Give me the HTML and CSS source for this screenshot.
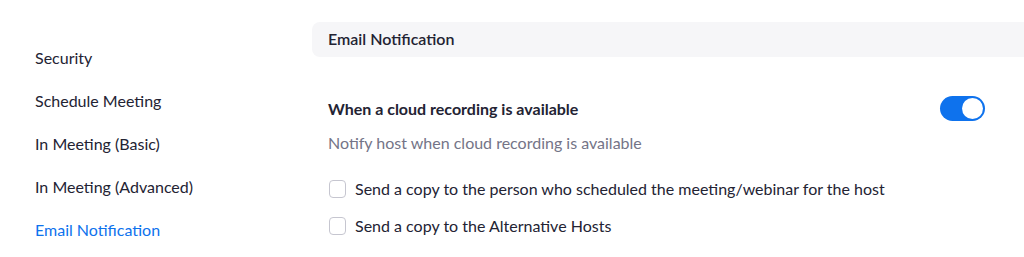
FILE: index.html
```html
<!DOCTYPE html>
<html>
<head>
  <meta charset="UTF-8" />
  <title>Settings - Email Notification</title>
  <link rel="stylesheet" href="styles.css">
</head>
<body>
  <div class="page">
    <!-- Settings menu -->
    <div class="side-nav">
      <a href="#" class="nav-item">Security</a>
      <a href="#" class="nav-item">Schedule Meeting</a>
      <a href="#" class="nav-item">In Meeting (Basic)</a>
      <a href="#" class="nav-item">In Meeting (Advanced)</a>
      <a href="#" class="nav-item active">Email Notification</a>
    </div>

    <!-- Settings content -->
    <div class="content">
      <div class="section-title">Email Notification</div>

      <div class="setting">
        <div class="setting-row">
          <div class="setting-name">When a cloud recording is available</div>
          <label class="toggle on"><span class="knob"></span></label>
        </div>
        <div class="setting-desc">Notify host when cloud recording is available</div>
        <label class="check-row"><span class="checkbox"></span>Send a copy to the person who scheduled the meeting/webinar for the host</label>
        <label class="check-row"><span class="checkbox"></span>Send a copy to the Alternative Hosts</label>
      </div>
    </div>
  </div>
</body>
</html>
```

FILE: styles.css
```css
* {
  margin: 0;
  padding: 0;
  box-sizing: border-box;
}

body {
  font-family: Lato, 'Open Sans', sans-serif;
  font-size: 16px;
  background: #fff;
  color: #232333;
}

.page {
  display: flex;
}

.side-nav {
  width: 312px;
  flex-shrink: 0;
  padding: 36px 0 0 35px;
  display: flex;
  flex-direction: column;
}

.nav-item {
  height: 43px;
  line-height: 43px;
  color: #232333;
  text-decoration: none;
}

.nav-item.active {
  color: #0e72ed;
}

.content {
  flex: 1;
  padding-top: 22px;
}

.section-title {
  height: 35px;
  line-height: 33px;
  padding-left: 16px;
  background: #f6f6f8;
  border-radius: 8px 0 0 8px;
  font-weight: 600;
}

.setting {
  padding: 39px 39px 0 16px;
}

.setting-row {
  display: flex;
  justify-content: space-between;
  align-items: center;
  height: 25px;
}

.setting-name {
  font-weight: 700;
}

.toggle {
  width: 45px;
  height: 25px;
  border-radius: 13px;
  background: #d9d9e0;
  display: flex;
  align-items: center;
  padding: 2px;
}

.toggle.on {
  background: #0e72ed;
  justify-content: flex-end;
}

.knob {
  width: 21px;
  height: 21px;
  border-radius: 50%;
  background: #fff;
}

.setting-desc {
  color: #747487;
  margin-top: 12px;
  line-height: 20px;
  margin-bottom: 17px;
}

.check-row {
  display: flex;
  align-items: center;
  height: 37px;
  gap: 9px;
  color: #232333;
}

.checkbox {
  width: 17px;
  height: 18px;
  border: 1.5px solid #c6c6d0;
  border-radius: 4px;
  margin-left: 1px;
  background: #fff;
}
```
